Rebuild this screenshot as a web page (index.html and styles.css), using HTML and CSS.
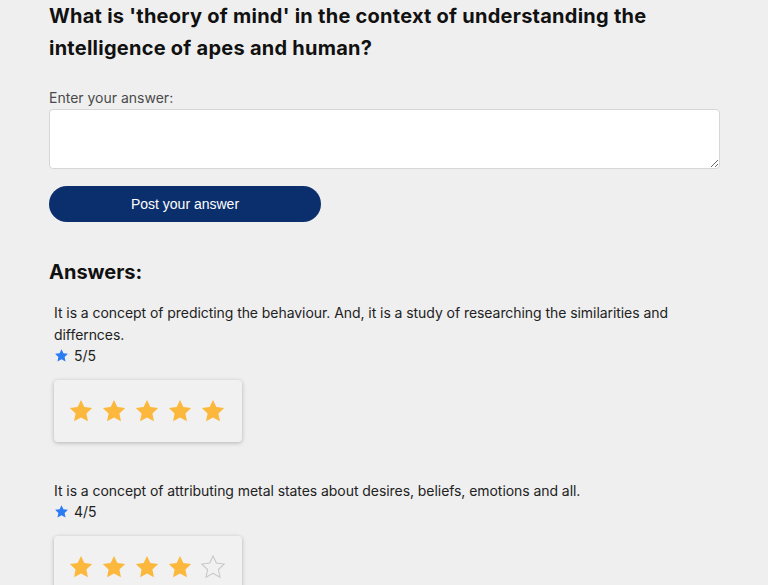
FILE: index.html
```html
<!DOCTYPE html>
<html lang="en">
    <head>
        <meta charset="UTF-8">
        <title>Question</title>
        <link rel="stylesheet" href="styles.css">
    </head>
    <body>
        <div class="question-page">
            <h1 class="question-title">What is 'theory of mind' in the context of understanding the intelligence of apes and human?</h1>

            <form class="answer-form">
                <label for="answer">Enter your answer:</label>
                <textarea id="answer" name="answer"></textarea>
                <button type="submit">Post your answer</button>
            </form>

            <h2 class="answers-title">Answers:</h2>

            <div class="answer">
                <p class="answer-text">It is a concept of predicting the behaviour. And, it is a study of researching the similarities and differnces.</p>
                <div class="answer-score">
                    <svg class="score-icon" viewBox="0 0 24 24"><path d="M12 1.8l3.1 6.6 7.2.9-5.3 5 1.4 7.1L12 17.9l-6.4 3.5 1.4-7.1-5.3-5 7.2-.9z"/></svg>
                    <span>5/5</span>
                </div>
                <div class="rating-box">
                    <svg class="star full" viewBox="0 0 24 24"><path d="M12 1.8l3.1 6.6 7.2.9-5.3 5 1.4 7.1L12 17.9l-6.4 3.5 1.4-7.1-5.3-5 7.2-.9z"/></svg>
                    <svg class="star full" viewBox="0 0 24 24"><path d="M12 1.8l3.1 6.6 7.2.9-5.3 5 1.4 7.1L12 17.9l-6.4 3.5 1.4-7.1-5.3-5 7.2-.9z"/></svg>
                    <svg class="star full" viewBox="0 0 24 24"><path d="M12 1.8l3.1 6.6 7.2.9-5.3 5 1.4 7.1L12 17.9l-6.4 3.5 1.4-7.1-5.3-5 7.2-.9z"/></svg>
                    <svg class="star full" viewBox="0 0 24 24"><path d="M12 1.8l3.1 6.6 7.2.9-5.3 5 1.4 7.1L12 17.9l-6.4 3.5 1.4-7.1-5.3-5 7.2-.9z"/></svg>
                    <svg class="star full" viewBox="0 0 24 24"><path d="M12 1.8l3.1 6.6 7.2.9-5.3 5 1.4 7.1L12 17.9l-6.4 3.5 1.4-7.1-5.3-5 7.2-.9z"/></svg>
                </div>
            </div>

            <div class="answer">
                <p class="answer-text">It is a concept of attributing metal states about desires, beliefs, emotions and all.</p>
                <div class="answer-score">
                    <svg class="score-icon" viewBox="0 0 24 24"><path d="M12 1.8l3.1 6.6 7.2.9-5.3 5 1.4 7.1L12 17.9l-6.4 3.5 1.4-7.1-5.3-5 7.2-.9z"/></svg>
                    <span>4/5</span>
                </div>
                <div class="rating-box">
                    <svg class="star full" viewBox="0 0 24 24"><path d="M12 1.8l3.1 6.6 7.2.9-5.3 5 1.4 7.1L12 17.9l-6.4 3.5 1.4-7.1-5.3-5 7.2-.9z"/></svg>
                    <svg class="star full" viewBox="0 0 24 24"><path d="M12 1.8l3.1 6.6 7.2.9-5.3 5 1.4 7.1L12 17.9l-6.4 3.5 1.4-7.1-5.3-5 7.2-.9z"/></svg>
                    <svg class="star full" viewBox="0 0 24 24"><path d="M12 1.8l3.1 6.6 7.2.9-5.3 5 1.4 7.1L12 17.9l-6.4 3.5 1.4-7.1-5.3-5 7.2-.9z"/></svg>
                    <svg class="star full" viewBox="0 0 24 24"><path d="M12 1.8l3.1 6.6 7.2.9-5.3 5 1.4 7.1L12 17.9l-6.4 3.5 1.4-7.1-5.3-5 7.2-.9z"/></svg>
                    <svg class="star empty" viewBox="0 0 24 24"><path d="M12 1.8l3.1 6.6 7.2.9-5.3 5 1.4 7.1L12 17.9l-6.4 3.5 1.4-7.1-5.3-5 7.2-.9z"/></svg>
                </div>
            </div>
        </div>
    </body>
</html>
```

FILE: styles.css
```css
body {
    font-family: Inter, "Liberation Sans", Arial, sans-serif;
    margin: 0;
    padding: 0;
    background: #efefef;
    color: #1c1c1c;
    height: 100vh;
    overflow: hidden;
}
.question-page {
    padding: 0 48px 0 49px;
}
.question-title {
    margin: 0;
    font-size: 20px;
    line-height: 32px;
    font-weight: 700;
    letter-spacing: 0.25px;
    color: #111;
    width: 640px;
}
.answer-form {
    display: flex;
    flex-direction: column;
    margin-top: 25px;
}
.answer-form label {
    font-size: 14px;
    color: #4a4a4a;
    line-height: 18px;
    margin-bottom: 2px;
}
.answer-form textarea {
    height: 60px;
    box-sizing: border-box;
    border: 1px solid #d6d6d6;
    border-radius: 4px;
    background: #fff;
    resize: vertical;
}
.answer-form button {
    width: 272px;
    height: 36px;
    margin-top: 17px;
    background: #0b2f6d;
    color: #fff;
    border: none;
    border-radius: 18px;
    font-family: "Liberation Sans", Arial, sans-serif;
    font-size: 14px;
    cursor: pointer;
}
.answers-title {
    margin: 38px 0 0;
    font-size: 20px;
    line-height: 24px;
    font-weight: 700;
    color: #111;
}
.answer {
    padding-left: 5px;
    margin-top: 18px;
    margin-bottom: 38px;
}
.answer-text {
    margin: 0;
    font-size: 14px;
    line-height: 21.5px;
    letter-spacing: -0.06px;
    color: #222;
}
.answer-score {
    display: flex;
    align-items: center;
    gap: 5px;
    font-size: 14px;
    line-height: 21.5px;
    color: #222;
}
.score-icon {
    width: 15px;
    height: 15px;
    fill: #2a7bf4;
}
.rating-box {
    display: flex;
    gap: 7px;
    width: 188px;
    height: 62px;
    box-sizing: border-box;
    padding: 0 14px;
    align-items: center;
    margin-top: 13px;
    background: #f1f1f1;
    border-radius: 4px;
    box-shadow: 0 1px 4px rgba(0, 0, 0, 0.25);
}
.star {
    width: 26px;
    height: 26px;
}
.star.full {
    fill: #fbb83c;
}
.star.empty {
    fill: none;
    stroke: #c8c8c8;
    stroke-width: 1;
}
```
